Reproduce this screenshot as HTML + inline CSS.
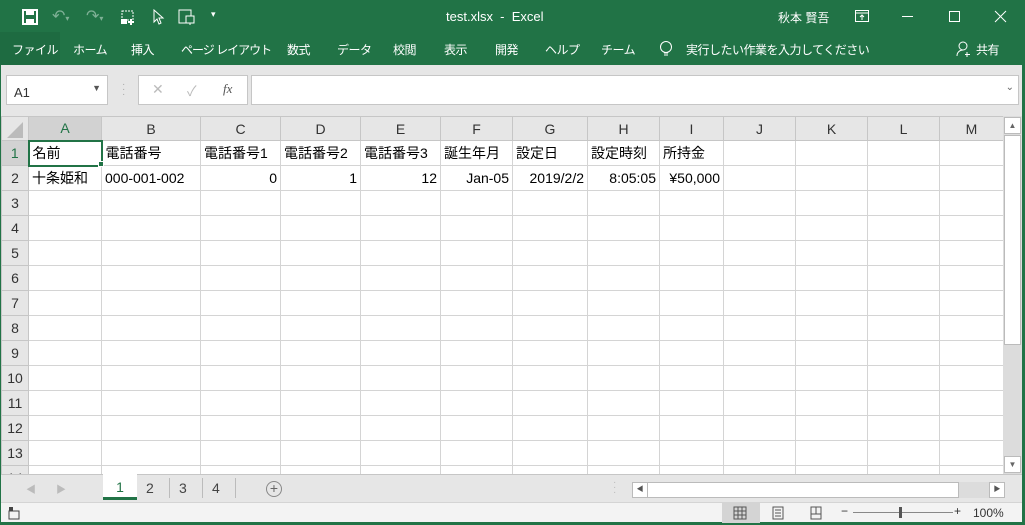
<!DOCTYPE html>
<html><head><meta charset="utf-8"><style>
*{box-sizing:border-box;margin:0;padding:0}
body{width:1025px;height:525px;overflow:hidden;background:#217346;font-family:"Liberation Sans","Noto Sans CJK JP",sans-serif;position:relative}
.abs{position:absolute}
.w{color:#fff}
#tb{left:0;top:0;width:1025px;height:32px;background:#217346}
#rb{left:0;top:32px;width:1025px;height:33px;background:#217346;font-size:12px;color:#fff}
#rb span{position:absolute;top:9px;letter-spacing:-0.5px}
#fa{left:1px;top:65px;width:1021px;height:51px;background:#e6e6e6}
table{border-collapse:collapse;table-layout:fixed;position:absolute;left:1px;top:116px}
td{border:1px solid #d4d4d4;height:25px;font-size:14px;padding:0 3px;white-space:nowrap;overflow:hidden;background:#fff;color:#000}
tr.h td{height:24px;background:#e6e6e6;text-align:center;color:#333;font-size:14px;border-color:#c6c6c6}
td.r{background:#e6e6e6;text-align:center;color:#333;border-color:#c6c6c6;padding:0}
td.n{text-align:right}
</style></head><body>
<div id="tb" class="abs">
 <svg class="abs" style="left:22px;top:9px" width="16" height="16"><rect x="1" y="1" width="14" height="14" fill="none" stroke="#fff" stroke-width="2"/><rect x="4" y="1" width="8" height="5" fill="#fff"/><rect x="4" y="10" width="8" height="5" fill="#fff"/></svg>
 <div class="abs" style="left:52px;top:6px;color:#7fb096;font-size:16px">↶<span style="font-size:8px">▾</span></div>
 <div class="abs" style="left:86px;top:6px;color:#7fb096;font-size:16px">↷<span style="font-size:8px">▾</span></div>
 <svg class="abs" style="left:120px;top:10px" width="16" height="16"><rect x="2" y="1" width="11" height="9" fill="none" stroke="#fff" stroke-dasharray="2 1"/><rect x="1" y="9" width="6" height="5" fill="#fff"/><path d="M11 9v6M8 12h6" stroke="#fff" stroke-width="2"/></svg>
 <svg class="abs" style="left:152px;top:9px" width="14" height="16"><path d="M2 1v12l3-3 2 5 2-1-2-5h4z" fill="none" stroke="#fff"/></svg>
 <svg class="abs" style="left:178px;top:9px" width="18" height="17"><rect x="1" y="1" width="12" height="13" fill="none" stroke="#fff"/><rect x="8" y="7" width="8" height="7" fill="#217346" stroke="#fff"/><path d="M12 14v2" stroke="#fff"/></svg>
 <div class="abs w" style="left:211px;top:9px;font-size:9px">▾</div>
 <div class="abs w" style="left:446px;top:9px;font-size:13px">test.xlsx &nbsp;- &nbsp;Excel</div>
 <div class="abs w" style="left:778px;top:9px;font-size:12px">秋本 賢吾</div>
 <svg class="abs" style="left:855px;top:10px" width="14" height="12"><rect x="0.5" y="0.5" width="13" height="11" fill="none" stroke="#fff"/><path d="M1 3h12M7 10V5M5 7l2-2 2 2" stroke="#fff" fill="none"/></svg>
 <div class="abs" style="left:902px;top:16px;width:11px;height:1px;background:#fff"></div>
 <div class="abs" style="left:949px;top:11px;width:11px;height:11px;border:1px solid #fff"></div>
 <svg class="abs" style="left:994px;top:10px" width="13" height="13"><path d="M1 1l11 11M12 1L1 12" stroke="#fff"/></svg>
</div>
<div id="rb" class="abs">
 <div class="abs" style="left:0;top:0;width:60px;height:33px;background:#1e6b41"></div>
 <span style="left:12px">ファイル</span><span style="left:73px">ホーム</span><span style="left:131px">挿入</span><span style="left:181px;letter-spacing:-1px">ページ レイアウト</span><span style="left:287px">数式</span><span style="left:337px">データ</span><span style="left:393px">校閲</span><span style="left:444px">表示</span><span style="left:495px">開発</span><span style="left:545px">ヘルプ</span><span style="left:601px">チーム</span>
 <svg class="abs" style="left:659px;top:8px" width="14" height="18"><circle cx="7" cy="7" r="5.5" fill="none" stroke="#fff"/><path d="M5 13h4M5 15h4" stroke="#fff"/></svg>
 <span style="left:686px">実行したい作業を入力してください</span>
 <svg class="abs" style="left:956px;top:9px" width="16" height="17"><circle cx="7" cy="5" r="4" fill="none" stroke="#fff"/><path d="M1 15c0-4 3-6 6-6M11 11v5M9 13.5h5" stroke="#fff" fill="none"/></svg>
 <span style="left:976px">共有</span>
</div>
<div id="fa" class="abs">
 <div class="abs" style="left:5px;top:10px;width:102px;height:30px;background:#fff;border:1px solid #c6c6c6;font-size:13px;color:#333;padding:9px 0 0 7px">A1<span class="abs" style="right:6px;top:7px;font-size:9px;color:#555">▼</span></div>
 <div class="abs" style="left:121px;top:17px;color:#aaa;font-size:10px;line-height:5px">·<br>·<br>·</div>
 <div class="abs" style="left:137px;top:10px;width:110px;height:30px;background:#fff;border:1px solid #c6c6c6;font-size:14px">
  <span class="abs" style="left:13px;top:5px;color:#bbb">✕</span><span class="abs" style="left:48px;top:5px;color:#bbb">✓</span><span class="abs" style="left:84px;top:5px;color:#555;font-family:'Liberation Serif',serif;font-style:italic;font-size:13px">fx</span></div>
 <div class="abs" style="left:250px;top:10px;width:768px;height:30px;background:#fff;border:1px solid #c6c6c6"><span class="abs" style="right:4px;top:6px;font-size:10px;color:#666">⌄</span></div>
</div>
<div class="abs" style="left:1px;top:116px;width:1021px;height:358px;background:#fff"></div>
<table>
<colgroup><col style="width:27px"><col style="width:73px"><col style="width:99px"><col style="width:80px"><col style="width:80px"><col style="width:80px"><col style="width:72px"><col style="width:75px"><col style="width:72px"><col style="width:64px"><col style="width:72px"><col style="width:72px"><col style="width:72px"><col style="width:64px"></colgroup>
<tr class="h"><td style="background:#e6e6e6;padding:0"><svg width="20" height="20" style="display:block;margin:2px 0 0 3px"><path d="M18 2v16H2z" fill="#bbb"/></svg></td><td style="background:#d2d2d2;color:#217346;border-bottom:2px solid #217346">A</td><td>B</td><td>C</td><td>D</td><td>E</td><td>F</td><td>G</td><td>H</td><td>I</td><td>J</td><td>K</td><td>L</td><td>M</td></tr>
<tr><td class="r" style="background:#d2d2d2;color:#217346">1</td><td style="border:2px solid #217346">名前</td><td>電話番号</td><td>電話番号1</td><td>電話番号2</td><td>電話番号3</td><td>誕生年月</td><td>設定日</td><td>設定時刻</td><td>所持金</td><td></td><td></td><td></td><td></td></tr>
<tr><td class="r">2</td><td>十条姫和</td><td>000-001-002</td><td class="n">0</td><td class="n">1</td><td class="n">12</td><td class="n">Jan-05</td><td class="n">2019/2/2</td><td class="n">8:05:05</td><td class="n">¥50,000</td><td></td><td></td><td></td><td></td></tr>
<tr><td class="r">3</td><td></td><td></td><td></td><td></td><td></td><td></td><td></td><td></td><td></td><td></td><td></td><td></td><td></td></tr>
<tr><td class="r">4</td><td></td><td></td><td></td><td></td><td></td><td></td><td></td><td></td><td></td><td></td><td></td><td></td><td></td></tr>
<tr><td class="r">5</td><td></td><td></td><td></td><td></td><td></td><td></td><td></td><td></td><td></td><td></td><td></td><td></td><td></td></tr>
<tr><td class="r">6</td><td></td><td></td><td></td><td></td><td></td><td></td><td></td><td></td><td></td><td></td><td></td><td></td><td></td></tr>
<tr><td class="r">7</td><td></td><td></td><td></td><td></td><td></td><td></td><td></td><td></td><td></td><td></td><td></td><td></td><td></td></tr>
<tr><td class="r">8</td><td></td><td></td><td></td><td></td><td></td><td></td><td></td><td></td><td></td><td></td><td></td><td></td><td></td></tr>
<tr><td class="r">9</td><td></td><td></td><td></td><td></td><td></td><td></td><td></td><td></td><td></td><td></td><td></td><td></td><td></td></tr>
<tr><td class="r">10</td><td></td><td></td><td></td><td></td><td></td><td></td><td></td><td></td><td></td><td></td><td></td><td></td><td></td></tr>
<tr><td class="r">11</td><td></td><td></td><td></td><td></td><td></td><td></td><td></td><td></td><td></td><td></td><td></td><td></td><td></td></tr>
<tr><td class="r">12</td><td></td><td></td><td></td><td></td><td></td><td></td><td></td><td></td><td></td><td></td><td></td><td></td><td></td></tr>
<tr><td class="r">13</td><td></td><td></td><td></td><td></td><td></td><td></td><td></td><td></td><td></td><td></td><td></td><td></td><td></td></tr>
<tr><td class="r">14</td><td></td><td></td><td></td><td></td><td></td><td></td><td></td><td></td><td></td><td></td><td></td><td></td><td></td></tr>
</table>
<div class="abs" style="left:98px;top:161px;width:6px;height:6px;background:#217346;border:1px solid #fff"></div>
<div class="abs" style="left:1003px;top:116px;width:19px;height:358px;background:#dcdcdc">
 <div class="abs" style="left:1px;top:1px;width:17px;height:17px;background:#fff;border:1px solid #bbb;font-size:8px;color:#666;text-align:center;line-height:15px">▲</div>
 <div class="abs" style="left:1px;top:19px;width:17px;height:210px;background:#fff;border:1px solid #bbb"></div>
 <div class="abs" style="left:1px;top:340px;width:17px;height:17px;background:#fff;border:1px solid #bbb;font-size:8px;color:#666;text-align:center;line-height:15px">▼</div>
</div>
<div class="abs" style="left:1px;top:474px;width:1021px;height:28px;background:#e6e6e6;border-top:1px solid #c6c6c6;font-size:14px;color:#444">
 <span class="abs" style="left:25px;top:6px;color:#bbb;font-size:10px">◀</span><span class="abs" style="left:55px;top:6px;color:#bbb;font-size:10px">▶</span>
 <div class="abs" style="left:102px;top:-1px;width:34px;height:26px;background:#fff;border-bottom:3px solid #217346;color:#217346;text-align:center;padding-top:5px">1</div>
 <span class="abs" style="left:145px;top:5px">2</span>
 <div class="abs" style="left:168px;top:3px;width:1px;height:20px;background:#bbb"></div>
 <span class="abs" style="left:178px;top:5px">3</span>
 <div class="abs" style="left:201px;top:3px;width:1px;height:20px;background:#bbb"></div>
 <span class="abs" style="left:211px;top:5px">4</span>
 <div class="abs" style="left:234px;top:3px;width:1px;height:20px;background:#bbb"></div>
 <div class="abs" style="left:265px;top:6px;width:16px;height:16px;border:1px solid #888;border-radius:50%;text-align:center;line-height:13px;font-size:14px;color:#666">+</div>
 <span class="abs" style="left:612px;top:5px;color:#bbb;font-size:10px;line-height:5px">·<br>·<br>·</span>
 <div class="abs" style="left:631px;top:7px;width:373px;height:16px;background:#dcdcdc">
  <div class="abs" style="left:0;top:0;width:16px;height:16px;background:#fff;border:1px solid #bbb;font-size:7px;color:#555;text-align:center;line-height:14px">◀</div>
  <div class="abs" style="left:15px;top:0;width:312px;height:16px;background:#fff;border:1px solid #bbb"></div>
  <div class="abs" style="left:357px;top:0;width:16px;height:16px;background:#fff;border:1px solid #bbb;font-size:7px;color:#555;text-align:center;line-height:14px">▶</div>
 </div>
</div>
<div class="abs" style="left:1px;top:502px;width:1021px;height:20px;background:#f3f3f3;border-top:1px solid #d4d4d4;font-size:12px;color:#333">
 <svg class="abs" style="left:7px;top:3px" width="12" height="14"><rect x="1" y="1" width="4" height="4" fill="#444"/><rect x="1" y="5" width="10" height="8" fill="none" stroke="#444"/></svg>
 <div class="abs" style="left:721px;top:0;width:38px;height:20px;background:#d4d4d4"></div>
 <svg class="abs" style="left:732px;top:3px" width="14" height="14"><path d="M1 1h12v12H1zM1 5h12M1 9h12M5 1v12M9 1v12" stroke="#555" fill="none"/></svg>
 <svg class="abs" style="left:771px;top:3px" width="12" height="14"><rect x="1" y="1" width="10" height="12" fill="none" stroke="#555"/><path d="M3 4h6M3 7h6M3 10h6" stroke="#555"/></svg>
 <svg class="abs" style="left:809px;top:3px" width="12" height="14"><rect x="1" y="1" width="10" height="12" fill="none" stroke="#555"/><path d="M1 8h10M6 1v7" stroke="#555"/></svg>
 <span class="abs" style="left:840px;top:1px">−</span>
 <div class="abs" style="left:852px;top:9px;width:100px;height:1px;background:#888"></div>
 <div class="abs" style="left:898px;top:4px;width:3px;height:11px;background:#555"></div>
 <span class="abs" style="left:953px;top:1px">+</span>
 <span class="abs" style="left:972px;top:3px">100%</span>
</div>
</body></html>
